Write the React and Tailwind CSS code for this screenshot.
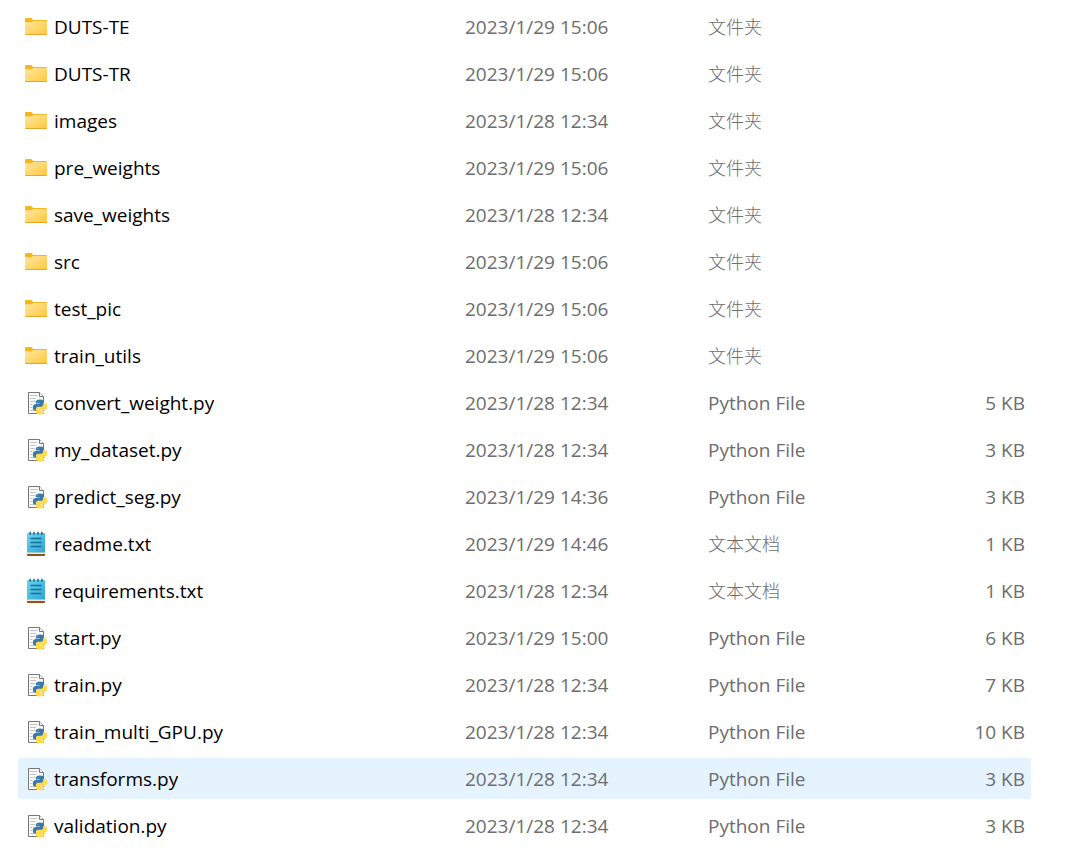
import clsx from "clsx";

const FILES = [
  { name: "DUTS-TE", date: "2023/1/29 15:06", kind: "folder" },
  { name: "DUTS-TR", date: "2023/1/29 15:06", kind: "folder" },
  { name: "images", date: "2023/1/28 12:34", kind: "folder" },
  { name: "pre_weights", date: "2023/1/29 15:06", kind: "folder" },
  { name: "save_weights", date: "2023/1/28 12:34", kind: "folder" },
  { name: "src", date: "2023/1/29 15:06", kind: "folder" },
  { name: "test_pic", date: "2023/1/29 15:06", kind: "folder" },
  { name: "train_utils", date: "2023/1/29 15:06", kind: "folder" },
  { name: "convert_weight.py", date: "2023/1/28 12:34", kind: "python", size: 5 },
  { name: "my_dataset.py", date: "2023/1/28 12:34", kind: "python", size: 3 },
  { name: "predict_seg.py", date: "2023/1/29 14:36", kind: "python", size: 3 },
  { name: "readme.txt", date: "2023/1/29 14:46", kind: "text", size: 1 },
  { name: "requirements.txt", date: "2023/1/28 12:34", kind: "text", size: 1 },
  { name: "start.py", date: "2023/1/29 15:00", kind: "python", size: 6 },
  { name: "train.py", date: "2023/1/28 12:34", kind: "python", size: 7 },
  { name: "train_multi_GPU.py", date: "2023/1/28 12:34", kind: "python", size: 10 },
  { name: "transforms.py", date: "2023/1/28 12:34", kind: "python", size: 3, selected: true },
  { name: "validation.py", date: "2023/1/28 12:34", kind: "python", size: 3 },
];

// one half of the python logo, the other half is the same shape turned around
const SNAKE =
  "M16 9.500c-3 0-4.200.9-4.200 2.400v1.700h3.900v.5h-3.700c-2.200 0-3.200 1.400-3.200 3.500 0 2.200 1 3.300 2.800 3.300h1.300v-1.300c0-1.500 1.100-2.400 2.500-2.400h2.400c1.400 0 2.300-.9 2.300-2.200v-3.100c0-1.600-1.400-2.400-4.100-2.400z";

function FolderIcon() {
  return (
    <svg viewBox="0 0 24 25" className="h-[25px] w-6 shrink-0" aria-hidden="true">
      <defs>
        <linearGradient id="folder-front" x1="0" y1="0" x2="1" y2="1">
          <stop offset="0" stopColor="#ffe7a2" />
          <stop offset="1" stopColor="#ffc83a" />
        </linearGradient>
      </defs>
      <path d="M1 5a1 1 0 0 1 1-1h5.400l1.800 2H22a1 1 0 0 1 1 1v4H1z" fill="#f7b51c" />
      <path d="M1 8.200h6.600l1.700-1.200H23V20a1 1 0 0 1-1 1H2a1 1 0 0 1-1-1z" fill="url(#folder-front)" />
      <path d="M1 20a1 1 0 0 0 1 1h20a1 1 0 0 0 1-1z" fill="#e8a52c" />
    </svg>
  );
}

function PythonIcon() {
  return (
    <svg viewBox="0 0 24 25" className="h-[25px] w-6 shrink-0" aria-hidden="true">
      <path d="M4.500 2.500h11l4 4v17h-15z" fill="#fafafa" stroke="#77777a" />
      <path d="M15.500 2.500v4h4" fill="#fff" stroke="#77777a" />
      <path
        d="M6 5.500h7.500M6 8.500h6M6 11.500h5M6 14.500h2.500M6 17.500h2M6 20.500h4"
        stroke="#c4c4c4"
        fill="none"
      />
      <path d={SNAKE} fill="#3878ab" />
      <circle cx="14" cy="11.600" r=".4" fill="#fff" />
      <g transform="rotate(180 16 17)">
        <path d={SNAKE} fill="#ffdb4d" />
        <circle cx="14" cy="11.600" r=".4" fill="#fff" />
      </g>
    </svg>
  );
}

function NotepadIcon() {
  return (
    <svg viewBox="0 0 24 25" className="h-[25px] w-6 shrink-0" aria-hidden="true">
      <defs>
        <linearGradient id="notepad-page" x1="0" y1="0" x2="1" y2="1">
          <stop offset="0" stopColor="#6bd5ef" />
          <stop offset="1" stopColor="#2fa5cf" />
        </linearGradient>
      </defs>
      <path d="M3 21h18v3a1 1 0 0 1-1 1H4a1 1 0 0 1-1-1z" fill="#9c4f12" />
      <path d="M3 21h18v2H3z" fill="#ece8e4" />
      <path d="M3 3a1 1 0 0 1 1-1h16a1 1 0 0 1 1 1v18.500H3z" fill="url(#notepad-page)" />
      <path
        d="M6.200 .7v3.100M10 .7v3.100M14 .7v3.100M17.800 .7v3.100"
        stroke="#2b6f93"
        strokeWidth="1.600"
      />
      <path d="M6.500 7.500h11M6.500 11.500h11M6.500 15.500h11" stroke="#12709b" strokeWidth="1.700" />
    </svg>
  );
}

const KINDS = {
  folder: { label: "文件夹", Icon: FolderIcon, cjk: true },
  python: { label: "Python File", Icon: PythonIcon },
  text: { label: "文本文档", Icon: NotepadIcon, cjk: true },
};

function FileRow({ file }) {
  const { label, Icon, cjk } = KINDS[file.kind];

  return (
    <tr className={clsx("h-[41px]", file.selected && "bg-[#e5f3ff]")}>
      <td className="rounded-l-xs pl-[6px] text-black">
        <div className="flex items-center gap-[6px]">
          <Icon />
          <span className="truncate">{file.name}</span>
        </div>
      </td>
      <td>{file.date}</td>
      <td className={clsx(cjk && "text-[18px] font-light")}>{label}</td>
      <td className="rounded-r-xs pr-[6px] text-right">
        {file.size && `${file.size} KB`}
      </td>
    </tr>
  );
}

function App() {
  return (
    <main className="min-h-screen bg-white pl-[18px] pr-[51px] font-['Open_Sans','Noto_Sans_CJK_SC',sans-serif]">
      <table className="w-full table-fixed border-separate border-spacing-x-0 border-spacing-y-[6px] text-[19px] leading-[26px] text-[#6d6d6d]">
        <colgroup>
          <col />
          <col className="w-[243px]" />
          <col className="w-[210px]" />
          <col className="w-[113px]" />
        </colgroup>
        <tbody>
          {FILES.map((file) => (
            <FileRow key={file.name} file={file} />
          ))}
        </tbody>
      </table>
    </main>
  );
}

export default App;
